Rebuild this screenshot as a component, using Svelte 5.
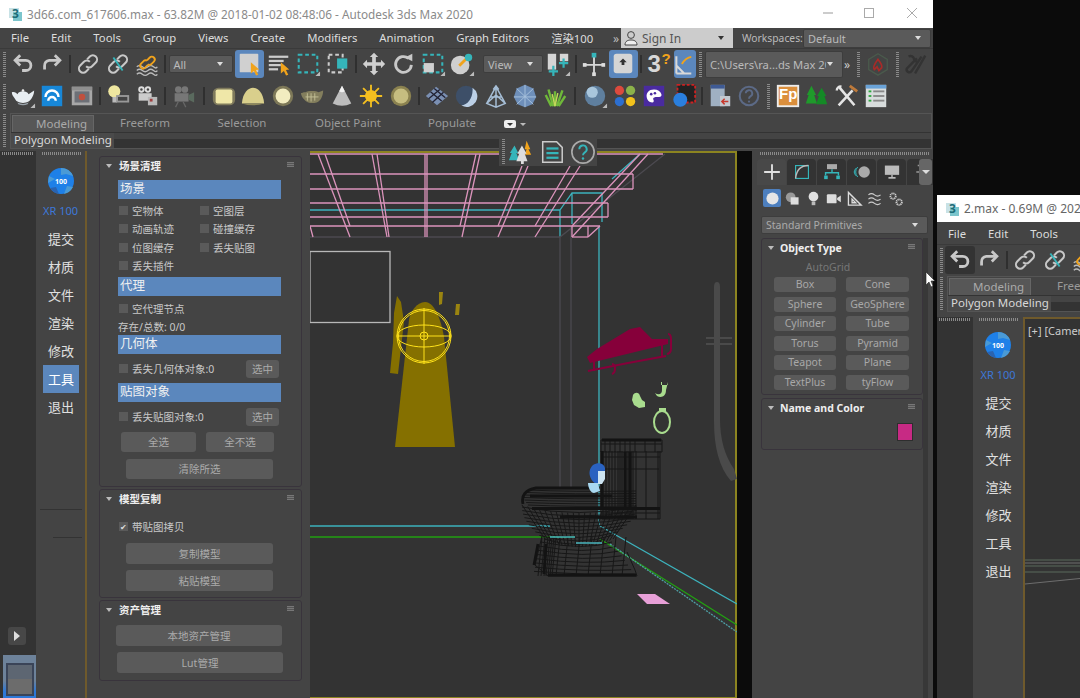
<script lang="ts">
  const teal = '#35b5ba';
  const orange = '#f0a31c';
  const s = (d: string, c = '#c8c8c8', w = 2) =>
    `<path d="${d}" fill="none" stroke="${c}" stroke-width="${w}"/>`;
  const f = (d: string, c = '#c8c8c8') => `<path d="${d}" fill="${c}"/>`;
  const ball = (cx: number, cy: number, r: number, c: string) =>
    `<circle cx="${cx}" cy="${cy}" r="${r}" fill="${c}"/>`;
  const box = (x: number, y: number, w: number, h: number, c: string, rx = 0) =>
    `<rect x="${x}" y="${y}" width="${w}" height="${h}" rx="${rx}" fill="${c}"/>`;
  const dash = (x: number, y: number, w: number, h: number, c: string) =>
    `<rect x="${x}" y="${y}" width="${w}" height="${h}" fill="none" stroke="${c}" stroke-width="2.2" stroke-dasharray="4 3"/>`;
  const flyout = f('M27 27h-5l5-5z', '#bbb');
  const pointer = f('M16 12l9 8-3.5.5 2.5 5-2.4 1-2.3-5-3.3 2.6z', orange);
  const chain = (c = '#c8c8c8') =>
    s('M13 9l3-3a4.5 4.5 0 0 1 6.4 6.4l-4 4a4.5 4.5 0 0 1-6.4 0', c, 2.2) +
    s('M15 19l-3 3a4.5 4.5 0 0 1-6.4-6.4l4-4a4.5 4.5 0 0 1 6.4 0', c, 2.2);

  const icons: Record<string, string> = {
    undo: s('M6 10h11a5.5 5.5 0 0 1 0 11h-4', '#c8c8c8', 3) + s('M11 4.5 5.5 10l5.5 5.5', '#c8c8c8', 3),
    redo: s('M22 10H11a5.5 5.5 0 0 0-5 6v4', '#c8c8c8', 3) + s('M17 4.5l5.5 5.5-5.5 5.5', '#c8c8c8', 3),
    link: chain(),
    unlink: chain() + s('M9 7l10 14', teal, 2),
    bind:
      s('M3 17q3-2.5 6 0t6 0 6 0 4 0M3 21q3-2.5 6 0t6 0 6 0 4 0M3 25q3-2.5 6 0t6 0 6 0 4 0', '#bbb', 1.5) +
      s('M14 10l3-3a3 3 0 0 1 4.4 4.4l-3 3a3 3 0 0 1-3.4 0M15 15l-3 3a3 3 0 0 1-4.4-4.4l3-3a3 3 0 0 1 3.4 0', orange, 2),
    select: box(4, 3, 20, 20, '#d0d0d0', 1) + pointer,
    byname:
      box(3, 5, 21, 2.4, '#ccc') + box(3, 9.5, 16, 2.4, '#ccc') + box(3, 14, 13, 2.4, '#ccc') + box(3, 18.5, 10, 2.4, '#ccc') + pointer,
    rect: dash(4, 4, 20, 19, teal) + flyout,
    cross: dash(4, 4, 15, 19, '#ccc') + box(13, 8, 11, 11, teal),
    move: f('M14 2l4.5 4.5H16V12h5.5V9.5L26 14l-4.5 4.5V16H16v5.5h2.5L14 26l-4.5-4.5H12V16H6.5v2.5L2 14l4.5-4.5V12H12V6.5H9.5z', '#d0d0d0'),
    rotate: s('M20 8a8.5 8.5 0 1 0 3 7', '#c8c8c8', 3) + f('M16 7l8-4v8z', '#c8c8c8'),
    scale: dash(4, 4, 20, 19, teal) + box(4, 13, 11, 10, '#d0d0d0') + flyout,
    place: ball(12, 15, 10, '#cfcfcf') + s('M11 16l9-9', orange, 3) + ball(21, 7, 4, teal) + flyout,
    snap: box(3, 3, 9, 17, '#d5d5d5') + box(16, 3, 9, 8, '#d5d5d5') + s('M9 16v11M4 22h10M20 8v10M15 13h10', teal, 2.4) + flyout,
    pivot: s('M14 4v22M3 15h22', '#d8d8d8', 2) + box(11.5, 2, 5, 5, teal) + box(2, 13, 4, 4, '#ddd') + box(22, 13, 4, 4, '#ddd') + box(12, 23, 4, 4, '#ddd'),
    sign: box(4, 3, 20, 21, '#d5d5d5', 3) + f('M14 8l4 4h-2.5v3h-3v-3H10z', '#333'),
    angle: s('M3 26V4M3 26h19M3 16l10 10', '#d8d8d8', 2.6) + s('M10 14q5-8 12-9', orange, 2.4),
    cube: s('M14 3l10 6v11l-10 6-10-6V9z', '#4a5a4c', 1.4) + s('M14 9c-3 4-6 9-4 11l3-3 2 4 3-3c1-3-2-6-4-9z', '#a82b28', 1.8),
    wrench: s('M6 6a4 4 0 0 1 6 3l3 3M20 6L9 22a3 3 0 0 1-5-3l11-11M24 5L13 24', '#333', 2.6),
    teapot: f('M8 12c2-4 10-4 12 0l6-4c0 5-3 10-6 12-3 2-9 2-12 0-2-1-3-4-4-5-1-1-2-3-2-5 3-1 5 1 6 2z', '#e8eef2') + f('M8 21q6 3 12 0l-1 2q-5 2-10 0z', '#9aa3aa') + ball(14, 8, 1.4, '#eee') + flyout,
    blue: box(3, 3, 22, 22, '#1787d8') + s('M7 15a7 7 0 0 1 14 0M10 19a4 4 0 0 1 8 0', '#fff', 2.6),
    frame: box(3, 4, 22, 20, '#a8a8a8') + box(3, 4, 22, 4, '#8f8f8f') + box(6, 9, 16, 12, '#6d7077') + ball(14, 15, 3.5, '#c0503e'),
    light: ball(10, 9, 6.5, '#efe7a0') + box(8, 15, 5, 6, '#bbb') + box(12, 13, 14, 8, '#999') + box(14, 15, 10, 4, '#444'),
    camera: ball(8, 7, 3.4, '#ddd') + ball(15, 7, 3.4, '#ddd') + ball(8, 7, 1.3, '#444') + ball(15, 7, 1.3, '#444') + box(5, 11, 14, 8, '#ccc') + box(15, 15, 10, 9, '#b8b8b8') + box(17, 17, 3, 3, '#a04040'),
    video: ball(9, 7, 3.6, '#777') + ball(16, 7, 3.6, '#777') + box(5, 11, 15, 9, '#777') + f('M20 13l6-3v11l-6-3z', '#5a6a5e') + s('M9 20l-3 6M14 20l3 6', '#666', 1.4),
    sq: box(2, 5, 24, 19, '#7f7a5c', 6) + box(5, 7, 18, 15, '#efe7a8', 2),
    dome: f('M2 22C3 10 9 5 14 5s11 5 12 17z', '#d9cf8c') + f('M2 22h24q-12 4-24 0z', '#8d875c'),
    ring: ball(14, 14, 11, '#7d7858') + ball(14, 14, 8, '#f2ecc0'),
    pot: f('M7 10c2-2 12-2 14 0l5-2c0 5-2 11-7 13-4 1-8 1-11-1-2-2-5-4-6-9 3-1 4-1 5-1z', '#837e5d') + s('M9 11v8M13 11v9M17 11v8M7 15h14', '#c4bf96', 1),
    cone: f('M14 3L24 22q-10 5-20 0z', '#bdbdbd') + f('M14 3l3 6q-3 2-6 0z', '#f2f2f2'),
    sun: ball(14, 14, 6.5, '#f4bf20') + s('M14 2v24M2 14h24M5.5 5.5l17 17M22.5 5.5l-17 17', '#f4bf20', 2),
    disc: ball(14, 14, 11, '#8b8250') + ball(14, 14, 8, '#c6bd80'),
    grid: f('M2 14L13 4l13 10-12 10z', '#7a8fb2') + s('M7 9.5l12 10M11 6l12 10M5 17l12-10M9 21L21 10', '#223', 1.4),
    half: ball(14, 14, 11, '#3d4f68') + f('M21 5a11 11 0 0 1-12 19c7 0 13-8 12-19z', '#bcd0e6'),
    pyr: s('M14 4L4 22l10 4 10-4zM14 4v22M4 22l10-9 10 9M8 15h12', '#a6bed6', 1.6) + s('M11 7l3-4 3 4', '#a6bed6', 1.4),
    geo: f('M14 2l9 4 3 9-4 8-8 3-8-3-4-8 3-9z', '#6e8fba') + s('M14 2v24M5 6l18 17M23 6L5 23M2 15h24', '#a9c2de', 1),
    grass: s('M14 25V9M12 25L7 7M16 25l6-17M10 25L4 13M18 25l7-11', '#6fb83a', 2.6) + s('M14 25l-3-13M14 25l3-14', '#c1d85a', 1.6),
    sphere: ball(14, 14, 11, '#5f7f9e') + ball(11, 10, 6, '#a9c6dc') + flyout,
    balls: ball(8, 8, 5, '#dc4a3d') + ball(20, 8, 5, '#8cb24a') + ball(8, 20, 5, '#2d6fd0') + ball(20, 20, 5, '#f2c21c'),
    palette: box(3, 3, 22, 22, '#4a2ba0') + f('M14 7c-6 0-8 4-8 7 0 4 3 7 6 7 2 0 2-2 1.4-3-1-2 1-3 3-3h3c2 0 3-1 2.6-3C21 9 18 7 14 7z', '#fff') + ball(11, 12, 1.4, '#4a2ba0') + ball(15, 11, 1.4, '#4a2ba0'),
    rbox: box(7, 2, 19, 19, '#222') + `<rect x="7" y="2" width="19" height="19" fill="none" stroke="#c22" stroke-width="2" stroke-dasharray="3 2"/>` + ball(10, 18, 7.5, '#2a7fde'),
    docs: box(4, 2, 15, 23, '#9fb0c2') + box(4, 2, 15, 4, '#3e5a94') + box(14, 14, 11, 11, '#c2c8cf') + s('M16 20h7M19 17l-3 3 3 3', '#c73a2e', 1.6),
    help: `<circle cx="14" cy="14" r="10" fill="none" stroke="#5c6a86" stroke-width="2.2"/>` + s('M10.5 11a3.5 3.5 0 1 1 5 3.4c-1 .6-1.5 1-1.5 2.6', '#5c6a86', 2) + ball(14, 20, 1.2, '#5c6a86'),
    fp: box(2, 2, 24, 24, '#ededed') + box(4, 4, 20, 20, '#db8f3c'),
    trees: f('M8 3l5 10h-2l3 9H2l3-9H3z', '#1f9a2b') + f('M19 5l5 9h-2l3 9H13l3-9h-2z', '#148a26'),
    tools: s('M5 24L20 8M6 5l16 19', '#e4e4e4', 2.8) + s('M17 3l8 6', '#bf7a3a', 3) + s('M3 8a4 4 0 0 1 5-4', '#e4e4e4', 2.6),
    list: box(3, 2, 22, 24, '#d8dcdc') + box(3, 2, 22, 4, '#6aa3d8') + box(6, 8, 3, 2, '#2fa83f') + box(6, 13, 3, 2, '#2fa83f') + box(6, 18, 3, 2, '#2fa83f') + box(11, 8, 12, 2, '#888') + box(11, 13, 12, 2, '#888') + box(11, 18, 12, 2, '#888'),
    plus: s('M14 3v22M3 14h22', '#e0e0e0', 2.6),
    curve: `<rect x="5" y="5" width="18" height="18" fill="none" stroke="${teal}" stroke-width="1.6"/>` + s('M5 23q2-18 18-18', '#bbb', 2),
    hier: box(7, 3, 14, 7, '#aaa') + s('M14 10v5M5 19v-4h18v4', teal, 2) + box(3, 19, 5, 5, teal) + box(20, 19, 5, 5, teal),
    motion: ball(17, 14, 8, '#aaa') + s('M8 7a10 10 0 0 0 0 14M5 9a8 8 0 0 0 0 10', teal, 1.4),
    display: box(4, 5, 20, 13, '#bbb') + box(9, 21, 10, 2.4, '#bbb') + box(13, 18, 2, 3, '#bbb'),
    util: s('M8 5h8M12 5v6M6 14h8', '#999', 2),
    geom: ball(14, 14, 10, '#e6e6e6'),
    shape: ball(11, 12, 8, '#999') + box(11, 12, 13, 12, '#ddd'),
    bulb: ball(14, 11, 8, '#e0e0e0') + box(11, 19, 6, 6, '#bbb'),
    cam2: box(3, 7, 16, 15, '#ddd', 2) + f('M20 13l6-4v11l-6-4z', '#ddd'),
    tri: s('M4 25V4l21 21zM10 21v-6l6 6z', '#ddd', 2.2),
    waves: s('M4 8q5-4 10 0t10 0M4 15q5-4 10 0t10 0M4 22q5-4 10 0t10 0', '#ccc', 2),
    gears: `<circle cx="10" cy="10" r="4.5" fill="none" stroke="#ccc" stroke-width="3" stroke-dasharray="2 1"/><circle cx="20" cy="20" r="4.5" fill="none" stroke="#ccc" stroke-width="3" stroke-dasharray="2 1"/>`,
    forest: f('M20 2l4 9h-2l3 6h-7l2-6h-2z', orange) + f('M7 7l4 8H9l3 8H1l3-8H2z', teal) + f('M15 7l5 9h-2l3 8h-4v3h-3v-3H9l3-8h-2z', '#ddd'),
    lines: `<path d="M4 3h15l6 6v16H4z" fill="none" stroke="#ccc" stroke-width="1.6"/>` + box(8, 9, 13, 2.4, teal) + box(8, 14, 13, 2.4, teal) + box(8, 19, 13, 2.4, teal),
    ask: `<circle cx="14" cy="14" r="12" fill="none" stroke="#aaa" stroke-width="1.8"/>` + s('M10 11a4 4 0 1 1 6 3.4c-1 .6-2 1.4-2 3.2', teal, 2) + ball(14, 21, 1.3, teal),
    title: box(2, 2, 10, 10, '#c8e2e6') + box(6, 6, 9, 9, '#7cc5cc')
  };

  const row1 = ['undo', 'redo', '|', 'link', 'unlink', 'bind', '|'];
  const row1b = ['byname', 'rect', 'cross', '|', 'move', 'rotate', 'scale', 'place'];
  const row2 = ['teapot', 'blue', 'frame', '|', 'light', 'camera', '|', 'video', '||', 'sq', 'dome', 'ring', 'pot', 'cone', 'sun', 'disc', '|', 'grid', 'half', 'pyr', 'geo', 'grass', '||', 'sphere', 'balls', 'palette', 'rbox', '|', 'docs', 'help', 'grip', 'fp', 'trees', 'tools', 'list'];
  const menus = ['File', 'Edit', 'Tools', 'Group', 'Views', 'Create', 'Modifiers', 'Animation', 'Graph Editors', '渲染100'];
  const ribbonTabs = ['Freeform', 'Selection', 'Object Paint', 'Populate'];
  const navItems = ['提交', '材质', '文件', '渲染', '修改', '工具', '退出'];
  const cmdTabs = ['plus', 'curve', 'hier', 'motion', 'display', 'util'];
  const cmdIcons = ['geom', 'shape', 'bulb', 'cam2', 'tri', 'waves', 'gears'];
  const primitives = ['Box', 'Cone', 'Sphere', 'GeoSphere', 'Cylinder', 'Tube', 'Torus', 'Pyramid', 'Teapot', 'Plane', 'TextPlus', 'tyFlow'];

  // ceiling: [x1,y1,x2,y2], page coordinates
  const ceiling = [
    [310, 155, 663, 155], [310, 175, 633, 175], [310, 190, 633, 190], [310, 204, 608, 204], [310, 218, 608, 218], [310, 227, 600, 227],
    [318, 155, 350, 238], [325, 155, 350, 227], [372, 155, 387, 238], [377, 155, 389, 238],
    [425, 155, 425, 238], [427, 155, 427, 238], [480, 155, 462, 238], [476, 155, 460, 227],
    [528, 167, 498, 238], [522, 167, 498, 227], [580, 167, 535, 238], [570, 167, 535, 227],
    [648, 155, 572, 238], [640, 155, 572, 227], [633, 175, 633, 190], [608, 204, 608, 218],
    [572, 227, 572, 238], [588, 227, 588, 238], [572, 238, 588, 238], [600, 227, 588, 238], [310, 227, 313, 238]
  ];
  const cyan = 'M310 211H560V238M560 211L572 194H602V223M572 194V225M599 227V527M612 180L640 155M310 527H550M600 527L737 605';
  const grey = 'M310 238H560L665 155M560 238V490M571 227V490';

  function wires() {
    let d = '';
    // tank
    for (const x of [603, 606, 609, 612, 615, 618, 620, 622, 625, 627, 629, 631, 633, 636, 646, 658, 660]) d += `M${x} 452V520`;
    for (const x of [605, 610, 615, 620, 625, 630, 635, 645, 655]) d += `M${x} 441V453`;
    d += 'M601 441H662V453H601ZM601 445H662M602 458H660M603 470H659M602 514H660M602 520H660';
    // seat
    for (let y = 491; y <= 507; y += 2.5) d += `M${523 + Math.abs(y - 499) * 0.7} ${y}Q570 ${y + 2} 636 ${y + 1}`;
    // bowl rings
    for (let i = 0; i <= 9; i++) {
      const t = i / 9;
      const y = 508 + t * 32;
      d += `M${522 + t * t * 22} ${y}Q580 ${y + 11} ${637 - t * t * 32} ${y}`;
    }
    for (let u = -1; u <= 1; u += 0.1) {
      d += `M${579 + u * 57} ${506 + 8 * (1 - u * u)}L${579 + u * 34} ${540 + 8 * (1 - u * u)}`;
    }
    // foot
    d += 'M542 537L535 566L548 577H637L635 571L627 553';
    for (let i = 0; i <= 7; i++) d += `M${541 - i} ${543 + i * 4.2}Q585 ${552 + i * 3.5} ${612 + i * 3.2} ${543 + i * 4.6}`;
    for (const x of [540, 543, 546, 548, 550, 552, 554, 558, 566, 578, 590, 602, 614, 624]) d += `M${x + 2} 538L${x - 2} 577`;
    return d;
  }
  const toilet = wires();
</script>

{#snippet icon(name: string)}
  <svg class="ico" viewBox="0 0 28 28">{@html icons[name]}</svg>
{/snippet}

{#snippet tools(items: string[])}
  {#each items as it}
    {#if it === '|'}
      <i class="sep"></i>
    {:else if it === '||'}
      <i class="sep wide"></i>
    {:else if it === 'grip'}
      <i class="vgrip mid"></i>
    {:else}
      <span class="cell">
        {@render icon(it)}
        {#if it === 'fp'}<b class="fp">Fp</b>{/if}
      </span>
    {/if}
  {/each}
{/snippet}

{#snippet winTitle(label: string)}
  <svg class="tlogo" viewBox="0 0 16 16">{@html icons.title}<text x="5" y="12" class="tlogo-t">3</text></svg>
  <span class="ttext">{label}</span>
{/snippet}

{#snippet ribbon()}
  <div class="rtabs">
    <span class="rtab on">Modeling</span>
    {#each ribbonTabs as t}<span class="rtab">{t}</span>{/each}
    <svg class="pill" viewBox="0 0 24 8"><rect width="12" height="8" rx="2" fill="#eee" /><path d="M16 3h6l-3 3z" fill="#bbb" /><path d="M3 3h6L6 6z" fill="#333" /></svg>
  </div>
  <div class="rsub"><span class="rlabel">Polygon Modeling</span><span class="rfill"></span></div>
{/snippet}

{#snippet nav(active: string)}
  <div class="grip-h"></div>
  <svg class="logo" viewBox="0 0 28 28">
    <circle cx="14" cy="14" r="13" fill="#1e80e8" />
    <path d="M14 1a13 13 0 0 1 12 8l-7-2-5 1zM2 9l6 3-7 4zM17 27l3-8 6 1a13 13 0 0 1-9 7z" fill="#4a9ad6" />
    <path d="M3 21l6-1 3 7a13 13 0 0 1-9-6z" fill="#2a63b0" />
    <text x="14" y="17" class="logo-t">100</text>
  </svg>
  <div class="xr">XR 100</div>
  {#each navItems as n}
    <div class="nav-item" class:on={n === active}>{n}</div>
  {/each}
{/snippet}

<div class="desktop">
  <section class="win main">
    <header class="titlebar">
      {@render winTitle('3d66.com_617606.max - 63.82M @ 2018-01-02 08:48:06 - Autodesk 3ds Max 2020')}
      <span class="winbtns">
        <svg viewBox="0 0 100 12"><path d="M0 6h10" stroke="#999" /><rect x="41.5" y="1.5" width="9" height="9" fill="none" stroke="#aaa" /><path d="M84 1l10 10M94 1L84 11" stroke="#aaa" /></svg>
      </span>
    </header>

    <div class="menubar">
      <div class="menus wide">
        {#each menus as m}<span class="menu">{m}</span>{/each}
      </div>
      <span class="more">»</span>
      <span class="signin">
        <svg viewBox="0 0 14 16"><circle cx="7" cy="5" r="3.4" fill="none" stroke="#444" /><path d="M1 15c0-4 3-5 6-5s6 1 6 5z" fill="#eee" stroke="#444" /></svg>
        Sign In
        <em></em>
      </span>
      <span class="ws-label">Workspaces:</span>
      <span class="combo ws">Default<em></em></span>
    </div>

    <div class="toolbar">
      <i class="vgrip"></i>
      {@render tools(row1)}
      <span class="combo all">All<em></em></span>
      <span class="cell active">{@render icon('select')}</span>
      {@render tools(row1b)}
      <span class="combo view">View<em></em></span>
      <span class="cell">{@render icon('snap')}</span>
      <i class="sep"></i>
      <span class="cell">{@render icon('pivot')}</span>
      <span class="cell active">{@render icon('sign')}</span>
      <i class="sep"></i>
      <span class="cell three">3<b>?</b></span>
      <span class="cell active narrow">{@render icon('angle')}</span>
      <i class="vgrip mini"></i>
      <span class="combo path"><span class="clip">C:\Users\ra...ds Max 2020</span><em></em></span>
      <span class="more2">»</span>
      <i class="vgrip mid"></i>
      <span class="cell">{@render icon('cube')}</span>
      <i class="vgrip mid"></i>
      <span class="cell">{@render icon('wrench')}</span>
    </div>

    <div class="toolbar second">
      <i class="vgrip"></i>
      {@render tools(row2)}
    </div>

    <div class="ribbon">
      <i class="vgrip tall"></i>
      <div class="rbody">{@render ribbon()}</div>
    </div>

    <div class="workspace">
      <aside class="strip">
        <div class="grip-h short"></div>
        <button class="play" aria-label="Expand"></button>
        <div class="thumb"><span></span></div>
      </aside>

      <nav class="navcol">
        {@render nav('工具')}
        <hr class="rule one" />
        <hr class="rule two" />
      </nav>
      <div class="goldline"></div>

      <div class="rollouts">
        <section class="rollout first">
          <h4>场景清理</h4>
          <div class="body">
            <div class="band">场景</div>
            <div class="pair">
              <label><i class="cb"></i>空物体</label><label><i class="cb"></i>空图层</label>
              <label><i class="cb"></i>动画轨迹</label><label><i class="cb"></i>碰撞缓存</label>
              <label><i class="cb"></i>位图缓存</label><label><i class="cb"></i>丢失贴图</label>
              <label><i class="cb"></i>丢失插件</label>
            </div>
            <div class="band">代理</div>
            <label class="row"><i class="cb"></i>空代理节点</label>
            <div class="row plain">存在/总数: 0/0</div>
            <div class="band">几何体</div>
            <div class="row act"><label><i class="cb"></i>丢失几何体对象:0</label><button class="btn pick">选中</button></div>
            <div class="band">贴图对象</div>
            <div class="row act"><label><i class="cb"></i>丢失贴图对象:0</label><button class="btn pick">选中</button></div>
            <div class="pairbtn"><button class="btn sel">全选</button><button class="btn unsel">全不选</button></div>
            <button class="btn clear">清除所选</button>
          </div>
        </section>
        <section class="rollout copy">
          <h4>模型复制</h4>
          <div class="body">
            <label class="row"><i class="cb checked">✔</i>带贴图拷贝</label>
            <button class="btn long">复制模型</button>
            <button class="btn long">粘贴模型</button>
          </div>
        </section>
        <section class="rollout assets">
          <h4>资产管理</h4>
          <div class="body">
            <button class="btn big">本地资产管理</button>
            <button class="btn big lut">Lut管理</button>
          </div>
        </section>
      </div>

      <div class="viewport">
        <svg class="scene" viewBox="310 152 427 546" width="427" height="546">
          <g fill="none" stroke-width="1.3">
            <path d={cyan} stroke="#3db3bd" />
            <path d={grey} stroke="#4c4a50" />
            <path d="M310 538H575M600 540L737 626" stroke="#22a012" />
            <path d="M610 545L737 633" stroke="#4d9ea3" stroke-dasharray="2 1" />
            {#each ceiling as c}
              <line x1={c[0]} y1={c[1]} x2={c[2]} y2={c[3]} stroke="#dc94bc" />
            {/each}
            <rect x="310" y="252.5" width="80" height="71" stroke="#b8b8b8" />
          </g>

          <path d="M717 283q3 0 3 5V420q0 30 14 50l3 10-6 2c-12-14-17-34-17-60V288q0-5 3-5z" fill="#4a4a4a" />
          <path d="M706 339h26M706 345h26" stroke="#4a4a4a" stroke-width="2" />

          <!-- curtain -->
          <path d="M425 303c-8 0-15 10-16 18l-14 127h60l-11-110c-2-12-8-35-19-35z" fill="#857000" />
          <path d="M397 297l4 6 3 20 -6 52-8-1 3-30 1-30z" fill="#857000" />
          <path d="M439 293h4l-1 12-3 1zM456 305h4l-1 11h-4z" fill="#9a8410" />
          <g fill="none" stroke="#ffe21a">
            <circle cx="424" cy="337" r="27" />
            <circle cx="424" cy="337" r="25.5" />
            <ellipse cx="424" cy="337" rx="27" ry="11" />
            <ellipse cx="424" cy="337" rx="4" ry="4" />
            <path d="M424 309V365M397 337H451" />
          </g>

          <!-- towel rack -->
          <g fill="#86003a">
            <path d="M587 358l10-8 33-20 10-2 12 12H668v5L590 364z" />
          </g>
          <g fill="none" stroke="#86003a" stroke-width="2">
            <path d="M588 372l40-8 38-7M594 358v14M662 340v18M668 335q3 0 3 5v10q0 4-4 5M612 365q3 0 3 5 0 4-3 5" />
          </g>

          <!-- small green pieces -->
          <path d="M633 396c2-3 6-3 7 1l2 4 3 2v5l-6 1-5-3-2-5z" fill="#a9dc8e" />
          <path d="M668 383h-6v8c0 5-4 5-7 3l2 3c4 2 9 1 9-6z M661 383h7v3h-7z" fill="#a9dc8e" />
          <ellipse cx="662" cy="423" rx="8" ry="11" fill="none" stroke="#a9dc8e" stroke-width="2" />
          <rect x="659" y="409" width="7" height="4" fill="#a9dc8e" />

          <!-- toilet -->
          <path d={toilet} fill="none" stroke="#171717" stroke-width="1" />
          <path d="M523 505Q520 492 536 489H600M530 497H612M532 509.5H660M602 441H661M602 510V452M560 518H637M548 576H636M625 453V510M630 453V510M538 545L534 566M546 545L544 575" fill="none" stroke="#131313" stroke-width="2.8" />
          <path d="M593 466c5-3 11-2 12 3v4c-1 1-2 5-4 6l-2 5 -3 1c-5-3-10-12-3-19z" fill="#2a62c0" />
          <path d="M588 484h10l2 8-6 2c-3 0-6-5-6-10z" fill="#a8d8f0" />
          <path d="M598 472h7v8l-3 5h-4z" fill="#cde4f2" />
          <path d="M576 544h26M550 538H575" stroke="#49b5bd" stroke-width="1.3" />
          <path d="M637 595h18l15 10h-23z" fill="#e8a0d8" />
        </svg>

        <div class="vtools">
          <i class="vgrip small"></i>
          <span class="vcell">{@render icon('forest')}</span>
          <span class="vcell">{@render icon('lines')}</span>
          <span class="vcell">{@render icon('ask')}</span>
        </div>
      </div>
      <div class="blackbar"></div>
      <div class="gutter"></div>

      <aside class="command">
        <div class="grip-h wide"></div>
        <div class="cmdtabs">
          {#each cmdTabs as t, i}
            <span class="ctab" class:on={i === 0}>{@render icon(t)}</span>
          {/each}
          <span class="cdrop"><em></em></span>
        </div>
        <div class="cmdicons">
          {#each cmdIcons as t, i}
            <span class="cicon" class:on={i === 0}>{@render icon(t)}</span>
          {/each}
        </div>
        <div class="combo prim">Standard Primitives<em></em></div>
        <div class="cmdroll">
          <section class="rollout type">
            <h4>Object Type</h4>
            <div class="auto">AutoGrid</div>
            <div class="prims">
              {#each primitives as p}<button class="btn prim-btn">{p}</button>{/each}
            </div>
          </section>
          <section class="rollout color">
            <h4>Name and Color</h4>
            <div class="swatch"></div>
          </section>
        </div>
      </aside>
    </div>
  </section>

  <section class="win second-win">
    <header class="titlebar">
      {@render winTitle('2.max - 0.69M @ 2021')}
    </header>
    <div class="menubar">
      <div class="menus">
        <span class="menu">File</span><span class="menu">Edit</span><span class="menu">Tools</span>
      </div>
    </div>
    <div class="toolbar">
      <i class="vgrip"></i>
      <span class="cell pressed">{@render icon('undo')}</span>
      <span class="cell">{@render icon('redo')}</span>
      <i class="sep"></i>
      <span class="cell">{@render icon('link')}</span>
      <span class="cell">{@render icon('unlink')}</span>
      <span class="cell">{@render icon('bind')}</span>
    </div>
    <div class="ribbon">
      <i class="vgrip tall"></i>
      <div class="rbody">{@render ribbon()}</div>
    </div>
    <div class="workspace">
      <aside class="strip"><div class="grip-h short"></div></aside>
      <nav class="navcol">{@render nav('')}</nav>
      <div class="goldline"></div>
      <div class="viewport2">
        <span class="cam">[+] [Camera</span>
        <svg viewBox="0 0 60 40" width="60" height="40">
          <path d="M0 2H60M0 8H60M0 14H60" stroke="#5a6a5c" fill="none" />
          <path d="M0 5H60M0 26L20 24 60 20" stroke="#6e6e6e" fill="none" />
        </svg>
      </div>
    </div>
  </section>

  <svg class="cursor" viewBox="0 0 11 16"><path d="M1 0v13l3-3 2 5 2-1-2-5h4z" fill="#fff" stroke="#222" stroke-width=".6" /></svg>
</div>

<style>
  :global(body) {
    background: #0b0b0b;
  }
  .desktop {
    position: relative;
    width: 1080px;
    height: 698px;
    overflow: hidden;
    background: #0b0b0b;
    font-family: 'Noto Sans', 'Noto Sans CJK SC', sans-serif;
    font-size: 12px;
    color: #ccc;
  }
  .win {
    position: absolute;
    display: flex;
    flex-direction: column;
    background: #444;
  }
  .main {
    left: 0;
    top: 0;
    width: 933px;
    height: 698px;
  }
  .second-win {
    left: 937px;
    top: 195px;
    width: 320px;
    height: 503px;
  }
  i,
  em {
    display: block;
    font-style: normal;
  }
  button {
    padding: 0;
    border: none;
    font: inherit;
  }

  .titlebar {
    display: flex;
    align-items: center;
    height: 28px;
    flex: none;
    padding-left: 7px;
    gap: 4px;
    background: #fff;
    color: #8a8a8a;
    font-size: 11.75px;
  }
  .ttext {
    white-space: nowrap;
  }
  .second-win .titlebar {
    height: 27px;
    color: #666;
    font-size: 12px;
    gap: 4px;
  }
  .tlogo {
    width: 16px;
    height: 16px;
  }
  .tlogo-t {
    font: bold 12px 'Noto Sans', sans-serif;
    fill: #1c6d78;
  }
  .winbtns {
    margin-left: auto;
    margin-right: 10px;
    width: 100px;
  }

  .menubar {
    display: flex;
    align-items: center;
    flex: none;
    height: 20px;
    padding-left: 11px;
    color: #ddd;
    background: #444;
    box-shadow: 0 1px 0 #3a3a3a;
  }
  .menus {
    display: flex;
    gap: 22px;
    font-size: 11.3px;
    white-space: nowrap;
  }
  .menus.wide {
    flex: none;
    width: 602px;
  }
  .second-win .menubar {
    height: 22px;
  }
  .more {
    flex: none;
    width: 8px;
    color: #bbb;
  }
  .signin {
    display: flex;
    align-items: center;
    gap: 4px;
    align-self: stretch;
    position: relative;
    flex: none;
    width: 112px;
    padding-left: 3px;
    box-sizing: border-box;
    background: #ccc;
    color: #555;
  }
  .signin svg {
    width: 14px;
    height: 16px;
  }
  .signin em,
  .combo em {
    position: absolute;
    right: 9px;
    top: 50%;
    margin-top: -2px;
    border: 3.5px solid transparent;
    border-top: 4px solid #333;
    border-bottom: none;
  }
  .ws-label {
    flex: none;
    width: 61px;
    margin-left: 9px;
    color: #bbb;
    font-size: 10.3px;
    white-space: nowrap;
  }
  .combo {
    position: relative;
    display: flex;
    align-items: center;
    box-sizing: border-box;
    padding-left: 4px;
    background: #5a5a5a;
    border: 1px solid #3d3d3d;
    border-radius: 2px;
    color: #bbb;
    font-size: 11px;
  }
  .combo em {
    border-top-color: #ddd;
  }
  .ws {
    flex: none;
    width: 128px;
    height: 19px;
  }

  .toolbar {
    display: flex;
    align-items: center;
    flex: none;
    height: 30px;
    margin-top: 1px;
    padding-left: 8px;
    position: relative;
  }
  .toolbar.second {
    margin-top: 2px;
    height: 30px;
  }
  .second-win .toolbar {
    height: 29px;
  }
  .vgrip {
    width: 3px;
    flex: none;
    height: 26px;
    position: absolute;
    left: 3px;
    top: 2px;
    background: repeating-linear-gradient(0deg, #8a8a8a 0 1px, transparent 1px 2px);
  }
  .vgrip.mid {
    position: static;
    margin: 0 3px;
  }
  .vgrip.mini {
    position: static;
    margin: 0 3px;
    height: 26px;
  }
  .vgrip.tall {
    height: 34px;
    top: 2px;
  }
  .cell {
    position: relative;
    display: flex;
    align-items: center;
    justify-content: center;
    flex: none;
    width: 29.5px;
    height: 28px;
  }
  .ico {
    width: 26px;
    height: 26px;
  }
  .cell.active {
    background: #5b87bd;
    border-radius: 3px;
  }
  .cell.narrow {
    width: 22px;
    overflow: hidden;
  }
  .cell.pressed {
    background: #333;
    border-radius: 3px;
  }
  .sep {
    flex: none;
    width: 2px;
    height: 18px;
    margin: 0 2.25px;
    background: #2f2f2f;
  }
  .sep.wide {
    margin: 0 4.5px;
  }
  .cell.three {
    justify-content: flex-start;
    padding-left: 3px;
    box-sizing: border-box;
    font: bold 24px 'Liberation Sans', sans-serif;
    color: #d8d8d8;
  }
  .three b {
    position: absolute;
    left: 17px;
    top: 0;
    font-size: 15px;
    color: #f0a31c;
  }
  .fp {
    position: absolute;
    left: 6px;
    top: 3px;
    font: bold 15px 'Liberation Sans', sans-serif;
    color: #fff;
  }
  .all {
    width: 64px;
    height: 18px;
    margin-right: 2px;
  }
  .view {
    width: 60px;
    height: 18px;
    margin-left: 6px;
  }
  .path {
    flex: none;
    width: 138px;
    height: 27px;
    font-size: 11.2px;
  }
  .clip {
    display: block;
    width: 116px;
    overflow: hidden;
    white-space: nowrap;
  }
  .more2 {
    flex: none;
    width: 10px;
    margin-left: 1px;
  }

  .ribbon {
    position: relative;
    flex: none;
    padding: 2px 1px 0 10px;
    height: 37px;
    box-sizing: border-box;
    font-size: 11.5px;
  }
  .rbody {
    border: 1px solid #545454;
    border-top-color: #555;
  }
  .rtabs {
    display: flex;
    align-items: flex-end;
    height: 18px;
    gap: 0;
    color: #9a9a9a;
    border-bottom: 1px solid #333;
    overflow: hidden;
  }
  .rtab {
    width: 98px;
    text-align: center;
    flex: none;
    line-height: 15px;
    padding-bottom: 2px;
  }
  .rtab:nth-child(2) {
    margin-left: 15px;
    width: 72px;
  }
  .rtab:nth-child(3) {
    margin-left: 31px;
    width: 60px;
  }
  .rtab:nth-child(4) {
    margin-left: 41px;
    width: 70px;
  }
  .rtab:nth-child(5) {
    margin-left: 44px;
    width: 50px;
  }
  .rtab.on {
    width: 82px;
    margin-left: 1px;
    padding-left: 23px;
    box-sizing: border-box;
    background: #575757;
    color: #aaa;
    text-align: left;
    border: 1px solid #666;
    border-bottom: none;
    line-height: 15px;
    padding-bottom: 1px;
  }
  .pill {
    width: 24px;
    height: 8px;
    margin: 0 0 4px 27px;
    flex: none;
  }
  .rsub {
    display: flex;
    height: 15px;
    overflow: hidden;
    align-items: stretch;
  }
  .rlabel {
    background: #4a4a4a;
    color: #d8d8d8;
    line-height: 14px;
    padding: 0 2px 0 3px;
    white-space: nowrap;
    flex: none;
  }
  .rfill {
    flex: 1;
    margin-top: 6px;
    background: #333;
  }

  .workspace {
    display: flex;
    flex: 1;
    min-height: 0;
    margin-top: 3px;
  }
  .second-win .workspace {
    margin-top: 6px;
  }
  .strip {
    position: relative;
    flex: none;
    width: 36px;
    display: flex;
    flex-direction: column;
    background: #333;
  }
  .grip-h {
    flex: none;
    height: 3px;
    margin: 1px 2px 2px;
    background: repeating-linear-gradient(90deg, #8a8a8a 0 1px, transparent 1px 2px);
  }
  .grip-h.short {
    margin-bottom: 6px;
  }
  .play {
    position: absolute;
    left: 8px;
    top: 476px;
    width: 18px;
    height: 18px;
    border-radius: 3px;
    background: #474747;
  }
  .play::after {
    content: '';
    position: absolute;
    left: 6px;
    top: 4px;
    border: 5px solid transparent;
    border-left: 6px solid #ddd;
    border-right: none;
  }
  .thumb {
    position: absolute;
    left: 3px;
    top: 504px;
    width: 33px;
    height: 43px;
    box-sizing: border-box;
    padding: 8px 2px 6px 3px;
    background: linear-gradient(#6d829a 60%, #2d78d8 85%);
  }
  .thumb span {
    display: block;
    height: 100%;
    border: 2px solid #3a4458;
    background: linear-gradient(#5d6672 50%, #6c6c6c 50%);
  }

  .navcol {
    position: relative;
    flex: none;
    width: 49px;
    display: flex;
    flex-direction: column;
    align-items: stretch;
  }
  .navcol .grip-h {
    margin: 1px 4px 12px 6px;
  }
  .second-win .navcol .grip-h {
    margin-bottom: 10px;
  }
  .logo {
    width: 28px;
    height: 28px;
    align-self: center;
  }
  .logo-t {
    font: bold 7px 'Noto Sans', sans-serif;
    fill: #fff;
    text-anchor: middle;
  }
  .xr {
    height: 30px;
    line-height: 32px;
    text-align: center;
    color: #3d78d8;
    font-size: 11px;
  }
  .nav-item {
    height: 28px;
    line-height: 28px;
    margin: 0 6px 0 7px;
    text-align: center;
    font-size: 13px;
    color: #e0e0e0;
  }
  .nav-item.on {
    background: #5b87bd;
    color: #fff;
  }
  .rule {
    position: absolute;
    height: 1px;
    border: none;
    margin: 0;
    background: #333;
  }
  .rule.one {
    left: 4px;
    width: 42px;
    top: 358px;
  }
  .rule.two {
    left: 17px;
    width: 29px;
    top: 386px;
  }
  .goldline {
    flex: none;
    width: 2px;
    background: #6f5a2c;
  }

  .rollouts {
    flex: none;
    width: 223px;
    box-sizing: border-box;
    padding: 5px 0 0 12px;
    display: flex;
    flex-direction: column;
    gap: 2px;
  }
  .rollout {
    position: relative;
    box-sizing: border-box;
    border: 1px solid #39343c;
    border-radius: 3px;
    width: 203px;
  }
  h4 {
    position: relative;
    margin: 0;
    height: 18px;
    padding-left: 19px;
    font: bold 10.5px/18px 'Noto Sans', 'Noto Sans CJK SC', sans-serif;
    color: #eee;
  }
  h4::before {
    content: '';
    position: absolute;
    left: 6px;
    top: 7px;
    border: 3.5px solid transparent;
    border-top: 4px solid #bbb;
    border-bottom: none;
  }
  h4::after {
    content: '';
    position: absolute;
    right: 7px;
    top: 5px;
    width: 7px;
    height: 5px;
    background: repeating-linear-gradient(0deg, #777 0 1px, #555 1px 2px);
  }
  .first {
    height: 331px;
  }
  .copy {
    height: 109px;
  }
  .assets {
    height: 81px;
  }
  .body {
    padding: 5px 0 0 18px;
    width: 163px;
    font-size: 10.5px;
    color: #c8c8c8;
  }
  .band {
    height: 19px;
    line-height: 18px;
    padding-left: 2px;
    margin-bottom: 3px;
    background: #5b87bd;
    color: #f0f0f0;
    font-size: 12.5px;
  }
  .pair {
    display: grid;
    grid-template-columns: 81px 82px;
    grid-auto-rows: 18.5px;
    margin-bottom: 2px;
    margin-top: -1px;
  }
  label {
    display: flex;
    align-items: center;
    gap: 4px;
  }
  .cb {
    flex: none;
    width: 9px;
    height: 9px;
    margin-left: 1px;
    background: #5a5a5a;
    font-size: 8px;
    line-height: 9px;
    text-align: center;
    color: #ddd;
  }
  .row {
    display: flex;
    align-items: center;
    height: 18.5px;
  }
  .row.plain {
    height: 17px;
  }
  .row.act {
    justify-content: space-between;
    height: 18px;
    margin: 6px 2px 5px 0;
  }
  .btn {
    display: block;
    background: #5a5a5a;
    color: #ababab;
    border-radius: 3px;
    font-size: 10.5px;
    text-align: center;
  }
  .pick {
    width: 33px;
    height: 18px;
  }
  .pairbtn {
    display: flex;
    margin: 6px 0 7px 3px;
    gap: 10px;
  }
  .sel {
    width: 75px;
    height: 20px;
  }
  .unsel {
    width: 68px;
    height: 20px;
  }
  .clear {
    width: 147px;
    height: 20px;
    margin-left: 8px;
  }
  .copy .body {
    padding-top: 9px;
  }
  .copy .row {
    margin-bottom: 7px;
  }
  .long {
    width: 147px;
    height: 21px;
    margin: 0 0 6px 8px;
  }
  .assets .body {
    padding-top: 6px;
  }
  .big {
    width: 166px;
    height: 21px;
    margin: 0 0 6px -2px;
  }
  .big.lut {
    margin-left: -1px;
  }

  .viewport {
    position: relative;
    flex: none;
    width: 427px;
    box-sizing: border-box;
    background: #333;
    border-top: 2px solid #8c8420;
    border-right: 2px solid #8c8420;
    border-bottom: 2px solid #8c8420;
    overflow: visible;
    height: 548px;
  }
  .scene {
    position: absolute;
    left: 0;
    top: -2px;
  }
  .vtools {
    position: absolute;
    left: 189px;
    top: -16px;
    display: flex;
    align-items: center;
    gap: 1px;
    width: 98px;
    height: 29px;
    background: #444;
  }
  .vtools .vgrip.small {
    position: static;
    height: 25px;
    margin-left: 3px;
    flex: none;
  }
  .vcell {
    display: flex;
    flex: none;
    width: 30px;
    justify-content: center;
  }
  .blackbar {
    flex: none;
    width: 15px;
    background: #0b0b0b;
  }
  .gutter {
    flex: none;
    width: 5px;
  }

  .command {
    flex: none;
    width: 176px;
    display: flex;
    flex-direction: column;
  }
  .command .grip-h.wide {
    margin: 1px 4px 4px 3px;
  }
  .cmdtabs {
    position: relative;
    display: flex;
    gap: 1px;
    height: 26px;
    flex: none;
    overflow: hidden;
  }
  .ctab {
    flex: none;
    width: 29px;
    display: flex;
    justify-content: center;
    align-items: center;
    background: #333;
    border-radius: 4px 4px 0 0;
  }
  .ctab .ico {
    width: 20px;
    height: 20px;
  }
  .ctab.on {
    background: #484848;
  }
  .cdrop {
    position: absolute;
    left: 162px;
    top: 0;
    width: 13px;
    height: 26px;
    border-radius: 3px;
    background: #666;
  }
  .cdrop em {
    margin: 11px 0 0 3px;
    width: 0;
    border: 4px solid transparent;
    border-top: 4px solid #ddd;
    border-bottom: none;
  }
  .cmdicons {
    display: flex;
    padding: 4px 0 0 6px;
    height: 20px;
    gap: 2.6px;
    flex: none;
  }
  .cicon {
    width: 18px;
    height: 18px;
    border-radius: 2px;
    display: flex;
    align-items: center;
    justify-content: center;
  }
  .cicon .ico {
    width: 17px;
    height: 17px;
  }
  .cicon.on {
    background: #4d7fbe;
  }
  .prim {
    flex: none;
    width: 167px;
    height: 18px;
    margin: 7px 0 0 4px;
    font-size: 10.5px;
    color: #aaa;
  }
  .cmdroll {
    margin: 4px 0 0 4px;
    display: flex;
    flex-direction: column;
    gap: 3px;
    width: 162px;
    height: 460px;
    border-right: 5px solid #383838;
    box-sizing: content-box;
  }
  .type,
  .color {
    width: 162px;
  }
  .type {
    height: 157px;
  }
  .color {
    height: 52px;
  }
  .rollout.type h4,
  .rollout.color h4 {
    height: 19px;
    line-height: 19px;
    padding-left: 18px;
    font-size: 10.5px;
  }
  .auto {
    text-align: center;
    font-size: 10.5px;
    color: #777;
    height: 19px;
    line-height: 19px;
    padding-right: 28px;
  }
  .prims {
    display: grid;
    grid-template-columns: 62px 63px;
    column-gap: 10px;
    row-gap: 4.5px;
    padding-left: 12px;
  }
  .prim-btn {
    height: 15px;
    line-height: 15px;
    color: #a8a8a8;
  }
  .swatch {
    position: absolute;
    left: 135px;
    top: 24px;
    width: 16px;
    height: 18px;
    background: #c72a84;
    border: 1px solid #2e2e2e;
    box-sizing: border-box;
  }

  .viewport2 {
    position: relative;
    flex: none;
    width: 300px;
    background: #333;
    border-top: 2px solid #6f5a2c;
    box-sizing: border-box;
  }
  .cam {
    position: absolute;
    left: 3px;
    top: 4px;
    font-size: 11px;
    color: #ccc;
    white-space: nowrap;
  }
  .viewport2 svg {
    position: absolute;
    left: 0;
    top: 239px;
  }
  .second-win .navcol {
    width: 50px;
  }
  .cursor {
    position: absolute;
    left: 925px;
    top: 272px;
    width: 11px;
    height: 16px;
  }
</style>
